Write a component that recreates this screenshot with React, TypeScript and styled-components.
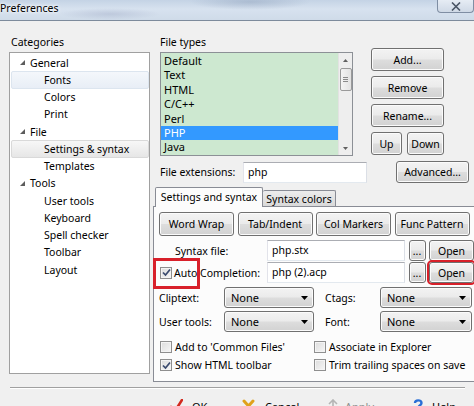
import React from "react";
import styled, { createGlobalStyle, css } from "styled-components";

const Global = createGlobalStyle`
  html, body { margin: 0; padding: 0; background: #f0f0f0; }
  body {
    font-family: "Noto Sans", "Open Sans", sans-serif;
    font-size: 10.5px;
    color: #000;
  }
  * { box-sizing: border-box; }
`;

const Window = styled.div`
  width: 474px;
  height: 406px;
  overflow: hidden;
  background: #f0f0f0;
  display: flex;
  flex-direction: column;
`;

const TitleBar = styled.div`
  height: 21px;
  flex: none;
  display: flex;
  justify-content: space-between;
  align-items: flex-start;
  border-bottom: 1px solid #7d8b9c;
  background:
    radial-gradient(ellipse 60px 8px at 250px 2px, rgba(120, 140, 170, 0.35), transparent),
    radial-gradient(ellipse 50px 6px at 110px 14px, rgba(150, 160, 190, 0.35), transparent),
    linear-gradient(180deg, #c4d3e5 0%, #d7e2ef 45%, #cfdbe9 100%);
`;

const Title = styled.div`
  font-size: 10.5px;
  line-height: 16px;
  text-shadow: 0 0 5px #fff, 0 0 3px #fff;
`;

const CloseBtn = styled.div`
  width: 37px;
  height: 13px;
  border: 1px solid #7f8ea3;
  border-top: none;
  border-radius: 0 0 4px 4px;
  background: linear-gradient(180deg, #e6ecf4 0%, #cfd9e6 100%);
  display: flex;
  align-items: center;
  justify-content: center;
`;

const Body = styled.div`
  display: grid;
  grid-template-columns: 141px 325px;
  column-gap: 3px;
  padding-left: 9px;
`;

const Column = styled.div`
  display: flex;
  flex-direction: column;
`;

const SectionLabel = styled.div<{ $indent?: number }>`
  margin-top: 13px;
  height: 18px;
  line-height: 17px;
  padding-left: ${(p) => p.$indent ?? 2}px;
`;

const Tree = styled.div`
  height: 322px;
  border: 1px solid #a0a0a0;
  background: #fff;
  padding-top: 1px;
`;

const TreeRow = styled.div<{ $child?: boolean; $state?: "hover" | "selected" }>`
  height: 17.25px;
  margin-left: 1px;
  display: flex;
  align-items: center;
  gap: 5px;
  padding-left: ${(p) => (p.$child ? 32 : 8)}px;
  border: 1px solid transparent;
  border-radius: 2px;
  white-space: nowrap;
  ${(p) =>
    p.$state === "hover" &&
    css`
      background: linear-gradient(180deg, #f4f7fb 0%, #e8eef6 100%);
      border-color: #dce5ef;
    `}
  ${(p) =>
    p.$state === "selected" &&
    css`
      background: linear-gradient(180deg, #f7f7f7 0%, #e6e6e6 100%);
      border-color: #d9d9d9;
    `}
`;

const TopGrid = styled.div`
  display: grid;
  grid-template-columns: 193px 73px;
  column-gap: 18px;
  padding-left: 7px;
`;

const ListBox = styled.div`
  height: 104px;
  border: 1px solid #8c9096;
  background: #cde8d0;
  display: flex;
`;

const ListItems = styled.div`
  flex: 1;
  padding-top: 1px;
`;

const ListItem = styled.div<{ $selected?: boolean }>`
  height: 14.4px;
  line-height: 14.4px;
  padding-left: 3px;
  font-size: 11px;
  ${(p) =>
    p.$selected &&
    css`
      background: #3399ff;
      color: #fff;
    `}
`;

const ScrollBar = styled.div`
  width: 14px;
  display: flex;
  flex-direction: column;
  align-items: center;
  background: #eeeeee;
  border-left: 1px solid #e2e2e2;
`;

const ScrollArrow = styled.div`
  height: 14px;
  width: 100%;
  display: flex;
  align-items: center;
  justify-content: center;
`;

const ScrollThumb = styled.div`
  margin-top: 1px;
  width: 12px;
  height: 23px;
  border: 1px solid #9a9a9a;
  border-radius: 2px;
  background: linear-gradient(90deg, #f4f4f4 0%, #e2e2e2 100%);
  display: flex;
  align-items: center;
  justify-content: center;
`;

const ScrollTrack = styled.div`
  flex: 1;
`;

const ButtonStack = styled.div`
  display: flex;
  flex-direction: column;
  gap: 5px;
  margin-top: -4px;
`;

const ButtonPair = styled.div`
  display: grid;
  grid-template-columns: 31px 37px;
  column-gap: 5px;
`;

const Btn = styled.div<{ $h?: number; $w?: number; $marked?: boolean }>`
  height: ${(p) => p.$h ?? 23}px;
  ${(p) => p.$w && `width: ${p.$w}px;`}
  border: 1px solid #707070;
  border-radius: 3px;
  background: linear-gradient(180deg, #f3f3f3 0%, #ebebeb 48%, #dddddd 52%, #d2d2d2 100%);
  box-shadow: inset 0 0 0 1px #fbfbfb;
  display: flex;
  align-items: center;
  justify-content: center;
  white-space: nowrap;
  font-size: 10.5px;
  ${(p) =>
    p.$marked &&
    css`
      outline: 2px solid #d8202a;
      outline-offset: 0px;
    `}
`;

const ExtRow = styled.div`
  display: flex;
  align-items: center;
  padding-left: 7px;
  margin-top: 5px;
  height: 22px;
`;

const FieldLabel = styled.div<{ $w?: number; $pad?: number }>`
  width: ${(p) => (p.$w ? `${p.$w}px` : "auto")};
  padding-left: ${(p) => p.$pad ?? 0}px;
  white-space: nowrap;
  display: flex;
  align-items: center;
  gap: 2px;
`;

const TextInput = styled.div<{ $w?: number }>`
  width: ${(p) => (p.$w ? `${p.$w}px` : "auto")};
  height: 21px;
  background: #fff;
  border: 1px solid #abadb3;
  border-left-color: #e2e3ea;
  border-right-color: #dbdfe6;
  border-bottom-color: #e3e9ef;
  padding-left: 4px;
  line-height: 19px;
  white-space: nowrap;
  overflow: hidden;
`;

const Spacer = styled.div<{ $w: number }>`
  width: ${(p) => p.$w}px;
`;

const TabStrip = styled.div`
  display: flex;
  align-items: flex-end;
  margin-top: 4px;
  padding-left: 2px;
  height: 19px;
  position: relative;
  z-index: 1;
`;

const Tab = styled.div<{ $active?: boolean }>`
  display: flex;
  align-items: center;
  justify-content: center;
  white-space: nowrap;
  border: 1px solid #898c95;
  border-bottom: none;
  border-radius: 2px 2px 0 0;
  ${(p) =>
    p.$active
      ? css`
          width: 108px;
          height: 20px;
          margin-bottom: -1px;
          background: #fcfcfc;
          padding-bottom: 1px;
        `
      : css`
          width: 73px;
          height: 16px;
          border-left: none;
          background: linear-gradient(180deg, #ececec 0%, #d9d9d9 100%);
        `}
`;

const Panel = styled.div`
  height: 176px;
  border: 1px solid #898c95;
  background: #fcfcfc;
  padding: 5px 0 0 5px;
  display: flex;
  flex-direction: column;
`;

const ButtonRow = styled.div`
  display: grid;
  grid-template-columns: repeat(4, 75px);
  column-gap: 3.5px;
`;

const FileRow = styled.div<{ $mt: number }>`
  position: relative;
  display: grid;
  grid-template-columns: 104.5px 138px 17px 45px;
  column-gap: 3.5px;
  align-items: center;
  margin-top: ${(p) => p.$mt}px;
  height: 21px;
`;

const SelectRow = styled.div<{ $mt: number }>`
  display: grid;
  grid-template-columns: 65px 90px 66px 92px;
  align-items: center;
  margin-top: ${(p) => p.$mt}px;
  height: 21px;
`;

const Select = styled.div`
  height: 21px;
  border: 1px solid #707070;
  border-radius: 3px;
  background: linear-gradient(180deg, #f3f3f3 0%, #ebebeb 48%, #dddddd 52%, #d2d2d2 100%);
  box-shadow: inset 0 0 0 1px #fbfbfb;
  display: flex;
  align-items: center;
  justify-content: space-between;
  padding: 0 5px 0 6px;
  font-size: 11px;
`;

const CheckRow = styled.div<{ $mt: number }>`
  display: grid;
  grid-template-columns: 154px 1fr;
  align-items: center;
  margin-top: ${(p) => p.$mt}px;
  height: 18px;
`;

const CheckItem = styled.div`
  display: flex;
  align-items: center;
  gap: 3px;
  padding-left: 1px;
  white-space: nowrap;
`;

const Box = styled.span`
  width: 12px;
  height: 12px;
  flex: none;
  border: 1px solid #8f8f8f;
  background: linear-gradient(135deg, #dcdcdc 0%, #f6f6f6 100%);
  box-shadow: inset 0 0 0 1px #f4f4f4;
  display: flex;
  align-items: center;
  justify-content: center;
`;

const RedFrame = styled.div`
  position: absolute;
  left: -6px;
  top: -4px;
  width: 47px;
  height: 31px;
  border: 3px solid #d8202a;
  pointer-events: none;
`;

const Separator = styled.div`
  margin: 5px 9px 0 10px;
  border-top: 1px solid #a0a0a0;
  border-bottom: 1px solid #fff;
`;

const Footer = styled.div`
  display: grid;
  grid-template-columns: 72px 85px 86px 1fr;
  padding-left: 170px;
  margin-top: 10px;
`;

const FooterBtn = styled.div<{ $disabled?: boolean; $gap: number }>`
  display: flex;
  align-items: flex-start;
  gap: ${(p) => p.$gap}px;
  font-size: 11px;
  line-height: 16px;
  color: ${(p) => (p.$disabled ? "#8d8d8d" : "#000")};
  white-space: nowrap;
`;

const Arrow = () => (
  <svg width="5" height="5" viewBox="0 0 5 5">
    <polygon points="5,0 5,5 0,5" fill="#5c5c5c" />
  </svg>
);

const Check = ({ checked }: { checked?: boolean }) => (
  <Box>
    {checked && (
      <svg width="9" height="9" viewBox="0 0 9 9">
        <path d="M1 4.5 L3.5 7 L8 1.5" stroke="#3a4a6e" strokeWidth="1.7" fill="none" />
      </svg>
    )}
  </Box>
);

const DownTri = () => (
  <svg width="7" height="4" viewBox="0 0 7 4">
    <polygon points="0,0 7,0 3.5,4" fill="#000" />
  </svg>
);

const treeItems: { label: string; child?: boolean; state?: "hover" | "selected" }[] = [
  { label: "General" },
  { label: "Fonts", child: true, state: "hover" },
  { label: "Colors", child: true },
  { label: "Print", child: true },
  { label: "File" },
  { label: "Settings & syntax", child: true, state: "selected" },
  { label: "Templates", child: true },
  { label: "Tools" },
  { label: "User tools", child: true },
  { label: "Keyboard", child: true },
  { label: "Spell checker", child: true },
  { label: "Toolbar", child: true },
  { label: "Layout", child: true },
];

const fileTypes = ["Default", "Text", "HTML", "C/C++", "Perl", "PHP", "Java"];

export default function App() {
  return (
    <>
      <Global />
      <Window>
        <TitleBar>
          <Title>Preferences</Title>
          <CloseBtn>
            <svg width="10" height="9" viewBox="0 0 10 9">
              <path d="M1 0.5 L9 8.5 M9 0.5 L1 8.5" stroke="#4a5565" strokeWidth="1.6" />
            </svg>
          </CloseBtn>
        </TitleBar>
        <Body>
          <Column>
            <SectionLabel>Categories</SectionLabel>
            <Tree>
              {treeItems.map((t) => (
                <TreeRow key={t.label} $child={t.child} $state={t.state}>
                  {!t.child && <Arrow />}
                  <span>{t.label}</span>
                </TreeRow>
              ))}
            </Tree>
          </Column>
          <Column>
            <SectionLabel $indent={7}>File types</SectionLabel>
            <TopGrid>
              <ListBox>
                <ListItems>
                  {fileTypes.map((f) => (
                    <ListItem key={f} $selected={f === "PHP"}>
                      {f}
                    </ListItem>
                  ))}
                </ListItems>
                <ScrollBar>
                  <ScrollArrow>
                    <svg width="5" height="3" viewBox="0 0 5 3">
                      <polygon points="0,3 5,3 2.5,0" fill="#606060" />
                    </svg>
                  </ScrollArrow>
                  <ScrollThumb>
                    <svg width="5" height="5" viewBox="0 0 5 5">
                      <path d="M0 0.5 H5 M0 2.5 H5 M0 4.5 H5" stroke="#8a8a8a" strokeWidth="1" />
                    </svg>
                  </ScrollThumb>
                  <ScrollTrack />
                  <ScrollArrow>
                    <svg width="5" height="3" viewBox="0 0 5 3">
                      <polygon points="0,0 5,0 2.5,3" fill="#606060" />
                    </svg>
                  </ScrollArrow>
                </ScrollBar>
              </ListBox>
              <ButtonStack>
                <Btn>Add...</Btn>
                <Btn>Remove</Btn>
                <Btn>Rename...</Btn>
                <ButtonPair>
                  <Btn>Up</Btn>
                  <Btn>Down</Btn>
                </ButtonPair>
              </ButtonStack>
            </TopGrid>
            <ExtRow>
              <FieldLabel $w={83}>File extensions:</FieldLabel>
              <TextInput $w={124}>php</TextInput>
              <Spacer $w={29} />
              <Btn $h={22} $w={73}>
                Advanced...
              </Btn>
            </ExtRow>
            <TabStrip>
              <Tab $active>Settings and syntax</Tab>
              <Tab>Syntax colors</Tab>
            </TabStrip>
            <Panel>
              <ButtonRow>
                <Btn $h={24}>Word Wrap</Btn>
                <Btn $h={24}>Tab/Indent</Btn>
                <Btn $h={24}>Col Markers</Btn>
                <Btn $h={24}>Func Pattern</Btn>
              </ButtonRow>
              <FileRow $mt={4}>
                <FieldLabel $pad={16}>Syntax file:</FieldLabel>
                <TextInput>php.stx</TextInput>
                <Btn $h={21}>...</Btn>
                <Btn $h={21}>Open</Btn>
              </FileRow>
              <FileRow $mt={1}>
                <FieldLabel $pad={1}>
                  <Check checked />
                  <span>Auto Completion:</span>
                </FieldLabel>
                <TextInput>php (2).acp</TextInput>
                <Btn $h={21}>...</Btn>
                <Btn $h={21} $marked>
                  Open
                </Btn>
                <RedFrame />
              </FileRow>
              <SelectRow $mt={4}>
                <FieldLabel>Cliptext:</FieldLabel>
                <Select>
                  <span>None</span>
                  <DownTri />
                </Select>
                <FieldLabel $pad={11}>Ctags:</FieldLabel>
                <Select>
                  <span>None</span>
                  <DownTri />
                </Select>
              </SelectRow>
              <SelectRow $mt={3}>
                <FieldLabel>User tools:</FieldLabel>
                <Select>
                  <span>None</span>
                  <DownTri />
                </Select>
                <FieldLabel $pad={11}>Font:</FieldLabel>
                <Select>
                  <span>None</span>
                  <DownTri />
                </Select>
              </SelectRow>
              <CheckRow $mt={6}>
                <CheckItem>
                  <Check />
                  <span>Add to 'Common Files'</span>
                </CheckItem>
                <CheckItem>
                  <Check />
                  <span>Associate in Explorer</span>
                </CheckItem>
              </CheckRow>
              <CheckRow $mt={0}>
                <CheckItem>
                  <Check checked />
                  <span>Show HTML toolbar</span>
                </CheckItem>
                <CheckItem>
                  <Check />
                  <span>Trim trailing spaces on save</span>
                </CheckItem>
              </CheckRow>
            </Panel>
          </Column>
        </Body>
        <Separator />
        <Footer>
          <FooterBtn $gap={9}>
            <svg width="13" height="14" viewBox="0 0 13 14">
              <path d="M1 8 L5 12 L12 1" stroke="#d22a1e" strokeWidth="2.6" fill="none" strokeLinecap="round" />
            </svg>
            <span>OK</span>
          </FooterBtn>
          <FooterBtn $gap={10}>
            <svg width="13" height="14" viewBox="0 0 13 14">
              <path d="M2 2 L11 12 M11 2 L2 12" stroke="#e0a21c" strokeWidth="3" strokeLinecap="round" />
            </svg>
            <span>Cancel</span>
          </FooterBtn>
          <FooterBtn $gap={6} $disabled>
            <svg width="12" height="14" viewBox="0 0 12 14">
              <path d="M6 1 L6 12 M2 5 L6 1 L10 5" stroke="#b5b5b5" strokeWidth="1.6" fill="none" />
            </svg>
            <span>Apply</span>
          </FooterBtn>
          <FooterBtn $gap={9}>
            <svg width="10" height="14" viewBox="0 0 10 14">
              <path d="M2 4 C2 0.5 8.5 0.5 8.5 4 C8.5 6.5 5 6.5 5 9.5" stroke="#2a6fd6" strokeWidth="2.4" fill="none" />
              <circle cx="5" cy="12.5" r="1.4" fill="#2a6fd6" />
            </svg>
            <span>Help</span>
          </FooterBtn>
        </Footer>
      </Window>
    </>
  );
}
